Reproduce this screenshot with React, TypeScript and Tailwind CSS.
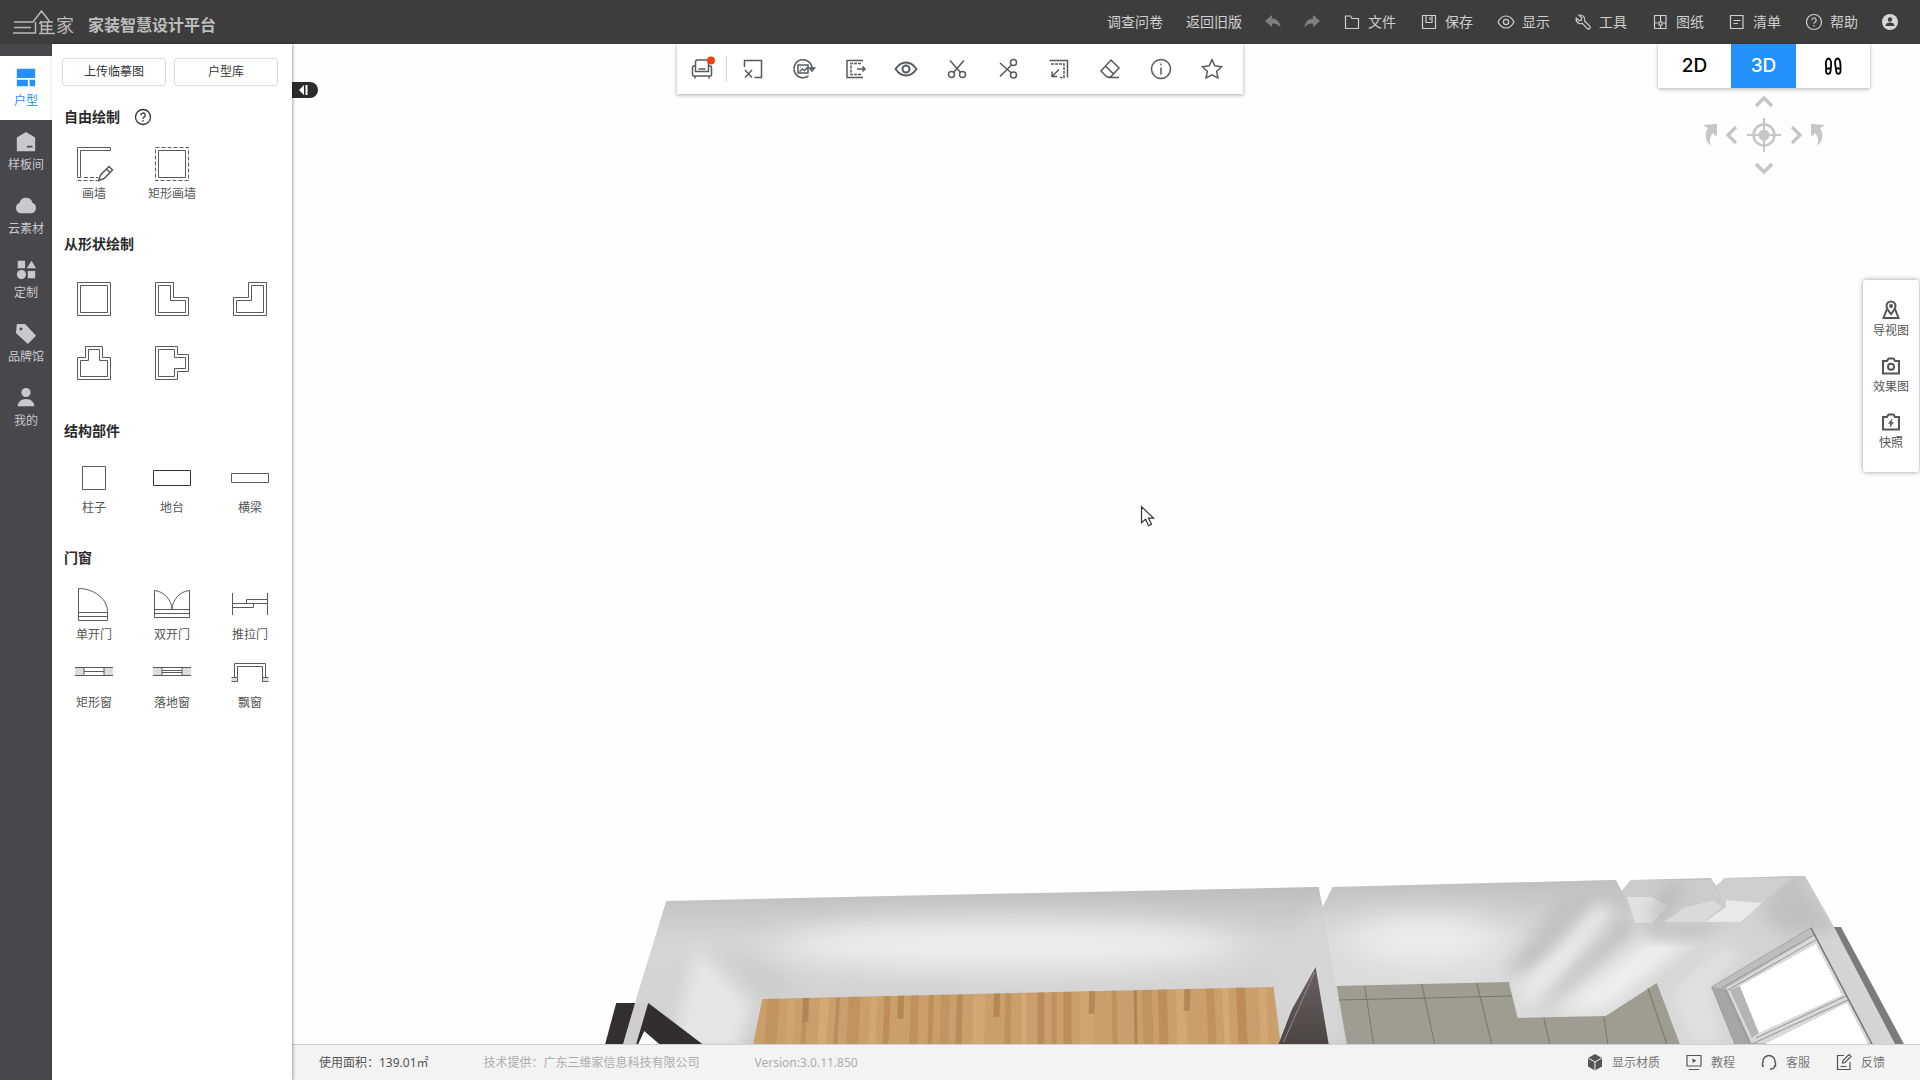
import * as React from 'react'

interface IconProps {
  children: React.ReactNode
  className?: string
  box?: string
}

// Shared wrapper for stroked icons
function Icon({ children, className = 'h-6 w-6', box = '0 0 24 24' }: IconProps) {
  return (
    <svg className={className} viewBox={box} fill="none" stroke="currentColor" strokeWidth="1.5" aria-hidden="true">
      {children}
    </svg>
  )
}

interface Item {
  label: string
  icon: React.ReactNode
}

const MENU: Item[] = [
  { label: '文件', icon: <path d="M2.5 3v12.5h13V5.5H9L7.5 3z" strokeWidth="1.2" /> },
  { label: '保存', icon: <path d="M2.5 2.5h13v13h-13zM6 2.5v7h6v-7M10 4v3" strokeWidth="1.2" /> },
  {
    label: '显示',
    icon: (
      <>
        <path d="M1 9c2-4 5-6 8-6s6 2 8 6c-2 4-5 6-8 6S3 13 1 9z" strokeWidth="1.2" />
        <circle cx="9" cy="9" r="2.6" strokeWidth="1.2" />
      </>
    ),
  },
  {
    label: '工具',
    icon: (
      <path
        d="M5 2.2A4.6 4.6 0 0 1 10.6 8l5.4 5.4a1.2 1.2 0 0 1 0 1.6l-.8.8a1.2 1.2 0 0 1-1.7 0L8.3 10.4A4.6 4.6 0 0 1 2.2 5l2.8 2.6 2.4-.4.5-2.4z"
        strokeWidth="1.2"
      />
    ),
  },
  {
    label: '图纸',
    icon: <path d="M3.5 2.5h11.5v13h-11.5zM9.5 2.5v6M3.5 10h3M12 10h3M9.5 12.5v3M8 9h3v3H8z" strokeWidth="1.2" />,
  },
  { label: '清单', icon: <path d="M2.5 2.5h12.5v13h-12.5zM5.5 7.5h7M5.5 10.5h4.5" strokeWidth="1.2" /> },
  {
    label: '帮助',
    icon: (
      <>
        <circle cx="9" cy="9" r="7.5" strokeWidth="1.2" />
        <path d="M6.8 7.2a2.2 2.2 0 1 1 3.3 1.9c-.8.5-1.1.8-1.1 1.7M9 12v1.4" strokeWidth="1.2" />
      </>
    ),
  },
]

const NAV: Item[] = [
  { label: '户型', icon: <path d="M2 2h20v10H2zM2 14h12v7H2zM16 14h6v7h-6z" /> },
  { label: '样板间', icon: <path fillRule="evenodd" d="M12 1l10 6v15H2V7zM13 16h6v2h-6z" /> },
  { label: '云素材', icon: <path d="M6 20a6 6 0 0 1-1-11.5 7.2 7.2 0 0 1 14 0A6 6 0 0 1 18 20z" /> },
  {
    label: '定制',
    icon: (
      <>
        <path d="M3 2h8v8H3zM18 2l5 8H13zM14 13h8v8h-8z" />
        <circle cx="7" cy="17" r="5" />
      </>
    ),
  },
  {
    label: '品牌馆',
    icon: <path fillRule="evenodd" d="M2 1l9 0 12 13-9 9L1 11zM6.5 5a1.6 1.6 0 1 0 .1 0z" />,
  },
  {
    label: '我的',
    icon: (
      <>
        <circle cx="12" cy="6" r="5" />
        <path d="M3 21c0-5 4-8 9-8s9 3 9 8z" />
      </>
    ),
  },
]

const TOOLS: Item[] = [
  {
    label: '替换清单',
    icon: (
      <>
        <path d="M5.5 9V5a2 2 0 0 1 2-2h9a2 2 0 0 1 2 2v4M5.5 9H4a1.5 1.5 0 0 0-1.5 1.5V18a1 1 0 0 0 1 1h17a1 1 0 0 0 1-1v-7.5A1.5 1.5 0 0 0 20 9h-1.5M5.5 9v5.5h13V9M8.5 12h7M5 19v2.5M19 19v2.5" />
        <circle cx="21" cy="3.5" r="4" fill="#f0430f" stroke="none" />
      </>
    ),
  },
  { label: '清空', icon: <path d="M3.5 10V3.5h17v17h-7M4 13l7 7.5M11 13l-7 7.5" /> },
  {
    label: '旋转图片',
    icon: (
      <>
        <path d="M16.5 18.8A9 9 0 1 1 20 12M17.5 11h5L20 14z" />
        <path d="M6 8h10v8H6zM7.5 14.5l3-2.5 2 1.5 3-3M8.500 10.300h.5" />
      </>
    ),
  },
  {
    label: '导出',
    icon: (
      <>
        <path d="M20 3.5H4v17h16M14 12h8M19.5 9.5L22 12l-2.5 2.5" />
        <path d="M18 6.5H8v11h10" strokeDasharray="3 1" />
      </>
    ),
  },
  {
    label: '显隐',
    icon: (
      <>
        <path
          d="M1.5 12C4.5 7.500 8 5.500 12 5.500s7.500 2 10.500 6.500c-3 4.500-6.500 6.500-10.500 6.500S4.500 16.500 1.500 12z"
          strokeWidth="1.8"
        />
        <circle cx="12" cy="12" r="3.5" strokeWidth="2" />
      </>
    ),
  },
  {
    label: '剪切',
    icon: (
      <>
        <path d="M5 3.5l10.5 12M19 3.5l-10.5 12" />
        <circle cx="6.5" cy="17.5" r="3" />
        <circle cx="17.5" cy="17.5" r="3" />
      </>
    ),
  },
  {
    label: '水平剪切',
    icon: (
      <>
        <path d="M4 6l11.5 10M4 19.5L15.5 8" />
        <circle cx="17.5" cy="5.5" r="3" />
        <circle cx="17.5" cy="18" r="3" />
      </>
    ),
  },
  {
    label: '缩放',
    icon: (
      <>
        <path d="M2.5 3.5h18v17M12 12.5l-7 7M5 14.5v5h5" />
        <path d="M4 7h13v13.5h-4" strokeDasharray="3 1" />
      </>
    ),
  },
  { label: '擦除', icon: <path d="M13 3l8 8-8.500 9H9l-6-6zM7.500 9l8.500 8.500M10 20.500h11" /> },
  {
    label: '信息',
    icon: (
      <>
        <circle cx="12" cy="12" r="9.5" />
        <path d="M12 10.5v7M12 6.5v1.800" />
      </>
    ),
  },
  {
    label: '收藏',
    icon: <path d="M12 2.800l2.900 6 6.600.9-4.800 4.600 1.200 6.600-5.900-3.100-5.900 3.100 1.200-6.600L2.500 9.700l6.600-.9z" />,
  },
]

const FREE_DRAW: Item[] = [
  {
    label: '画墙',
    icon: (
      <>
        <path d="M1.5 31.5v-30h33v3h-30v27z" />
        <path d="M1.5 34.5h20M8 31.5h14" strokeDasharray="4 2" />
        <path d="M22.5 34.5l2-5.500 8.500-8.500 3.500 3.500-8.500 8.500zM30.500 23l3.500 3.500" strokeWidth="1.5" />
      </>
    ),
  },
  {
    label: '矩形画墙',
    icon: (
      <>
        <path d="M1.5 1.5h33v33h-33z" strokeDasharray="4 2" />
        <path d="M4.5 4.5h27v27h-27z" />
      </>
    ),
  },
]

const SHAPES: Item[] = [
  { label: '矩形', icon: <path d="M1.5 1.5h33v33h-33zM4.5 4.5h27v27h-27z" /> },
  { label: 'L形', icon: <path d="M1.5 1.5h18v15h15v18h-33zM4.5 4.5h12v15h15v12h-27z" /> },
  { label: '反L形', icon: <path d="M34.5 1.5h-18v15h-15v18h33zM31.5 4.5h-12v15h-15v12h27z" /> },
  { label: '凸形', icon: <path d="M9.5 1.5h17v11h8v22h-33v-22h8zM12.5 4.5h11v11h8v16h-27v-16h8z" /> },
  { label: '侧凸形', icon: <path d="M1.5 1.5h22v8h11v17h-11v8h-22zM4.5 4.5h16v8h11v11h-11v8h-16z" /> },
]

const PARTS: Item[] = [
  { label: '柱子', icon: <path d="M6.5 6.5h23v23h-23z" /> },
  { label: '地台', icon: <path d="M-.5 10.5h37v15h-37z" stroke="#333" /> },
  { label: '横梁', icon: <path d="M-.5 13.5h37v9h-37z" /> },
]

const OPENINGS: Item[] = [
  { label: '单开门', icon: <path d="M2.5 33.5v-32c16 0 29 11 29 23v9zM2.5 25.5h29M2.5 29.5h29" /> },
  {
    label: '双开门',
    icon: <path d="M.5 30.5v-27c10 1 17 10 17.5 18.5C18.5 13.5 25 4.5 35.5 3.5v27zM.5 22.5h35M.5 26.5h35" />,
  },
  { label: '推拉门', icon: <path d="M.5 6v22M35.5 6v22M.5 16.5h35M14.5 16.5v-4h21M.5 20.5h21v-4" /> },
  {
    label: '矩形窗',
    icon: (
      <>
        <path d="M-1 12.500h9v8h-9M37 12.500h-9v8h9" fill="#ddd" />
        <path d="M8 12.500h20M8 20.500h20M8 16.500h20" />
      </>
    ),
  },
  {
    label: '落地窗',
    icon: (
      <>
        <path d="M-1 12.500h9v8h-9M37 12.500h-9v8h9" fill="#ddd" />
        <path d="M8 12.500h20M8 20.500h20M8 15.500h20M8 17.500h20" />
      </>
    ),
  },
  {
    label: '飘窗',
    icon: (
      <>
        <path d="M-.5 22.500h6v4h-6M36.500 22.500h-6v4h6" fill="#ddd" />
        <path d="M2.5 22.500v-14h31v14M5.500 22.500v-11h25v11" />
      </>
    ),
  },
]

const SIDE: Item[] = [
  {
    label: '导视图',
    icon: (
      <>
        <path d="M6 9l-3.500 9h15L14 9" />
        <path d="M10 14C7 10.500 5.500 8.500 5.500 6a4.500 4.500 0 0 1 9 0c0 2.500-1.500 4.500-4.500 8z" />
        <circle cx="10" cy="6" r="1" />
      </>
    ),
  },
  {
    label: '效果图',
    icon: (
      <>
        <path d="M2 5h4l1.500-2.500h5L14 5h4v12.500H2z" />
        <circle cx="10" cy="10.800" r="3" />
      </>
    ),
  },
  {
    label: '快照',
    icon: (
      <>
        <path d="M2 5h4l1.500-2.500h5L14 5h4v12.500H2z" />
        <path d="M11 7l-3.500 4.500h2L9 15l3.500-4.500h-2z" fill="currentColor" strokeWidth=".5" />
      </>
    ),
  },
]

const STATUS: Item[] = [
  {
    label: '显示材质',
    icon: (
      <>
        <path d="M8 0l7 4v8.500L8 16.500 1 12.500V4z" fill="currentColor" stroke="none" />
        <path d="M1.500 4.300L8 8l6.500-3.700M8 8v8" stroke="#f3f3f3" strokeWidth="1" />
      </>
    ),
  },
  {
    label: '教程',
    icon: (
      <>
        <path d="M1 1.500h14v10.500H1zM3 15.500h10" strokeWidth="1.200" />
        <path d="M6.500 4.500l4 2.300-4 2.300z" fill="currentColor" stroke="none" />
      </>
    ),
  },
  {
    label: '客服',
    icon: (
      <path
        d="M2 9V7.500a6 6 0 0 1 12 0V9M1.500 8.500v3.500h1.500M14.500 8.500v3.500H13M13.500 12c0 2-1.500 3-4.500 3.200"
        strokeWidth="1.400"
      />
    ),
  },
  {
    label: '反馈',
    icon: <path d="M8 1.500H1.500v14h12.500V8M4.500 12.500h6M6.500 9l.5-2.500 6-6 2 2-6 6z" strokeWidth="1.200" />,
  },
]

function Header() {
  return (
    <header className="flex h-11 shrink-0 items-center justify-between bg-[#3d3d3d] pl-3 pr-[22px] text-sm text-[#cfcfcf]">
      <div className="flex items-center text-[#b9b9b9]">
        <Icon className="h-7 w-11" box="0 0 44 28">
          <path d="M2 14h19l8.500-11L38 14M2 19.500h17M1 25h22.500V14M29 13l-1.500 3M29.500 15v10.500M28 14h13M29.500 18h11M29.500 21.500h11M27 25.500h16M35.500 14v11.500" />
        </Icon>
        <span className="pt-1.5 text-lg leading-6">家</span>
        <h1 className="pl-3.5 pt-1.5 text-base font-bold leading-6 text-[#bdbdbd]">家装智慧设计平台</h1>
      </div>
      <nav className="flex items-center gap-[23px]">
        <a href="#survey">调查问卷</a>
        <a href="#legacy">返回旧版</a>
        <button type="button" aria-label="撤销" className="text-[#808080]">
          <svg className="h-4 w-4" viewBox="0 0 16 16" fill="currentColor">
            <path d="M7 1v3.500c5 0 8 3.500 8.500 9.500C13.500 10.500 11 9.500 7 9.500V13L0 7z" />
          </svg>
        </button>
        <button type="button" aria-label="重做" className="text-[#808080]">
          <svg className="h-4 w-4" viewBox="0 0 16 16" fill="currentColor">
            <path d="M9 1v3.500C4 4.500 1 8 .5 14 2.500 10.500 5 9.500 9 9.500V13l7-6z" />
          </svg>
        </button>
        <div className="flex items-center gap-6">
          {MENU.map((item) => (
            <button key={item.label} type="button" className="flex items-center gap-[7px]">
              <Icon className="h-[18px] w-[18px]" box="0 0 18 18">
                {item.icon}
              </Icon>
              {item.label}
            </button>
          ))}
          <button type="button" aria-label="账户">
            <svg className="h-4 w-4" viewBox="0 0 16 16">
              <circle cx="8" cy="8" r="8" fill="#d6d6d6" />
              <circle cx="8" cy="5.500" r="2.200" fill="#3d3d3d" />
              <path d="M3.500 12c0-2.500 2-3.500 4.500-3.500s4.500 1 4.500 3.500z" fill="#3d3d3d" />
            </svg>
          </button>
        </div>
      </nav>
    </header>
  )
}

function NavRail() {
  return (
    <nav className="flex w-13 shrink-0 flex-col bg-[#48474c] pt-3">
      {NAV.map((item, i) => (
        <button
          key={item.label}
          type="button"
          className={`flex h-16 flex-col items-center gap-0.5 pt-[11px] text-xs leading-5 whitespace-nowrap ${
            i === 0 ? 'bg-white text-[#2390fb]' : 'text-[#c9c9cd]'
          }`}
        >
          <svg className="h-[22px] w-6 shrink-0" viewBox="0 0 24 24" fill="currentColor">
            {item.icon}
          </svg>
          {item.label}
        </button>
      ))}
    </nav>
  )
}

function PartGrid({ items }: { items: Item[] }) {
  return (
    <div className="mt-[19px] grid grid-cols-[repeat(3,78px)] gap-y-2.5">
      {items.map((item) => (
        <button key={item.label} type="button" className="flex flex-col items-center gap-0.5 text-xs leading-5 text-[#555]">
          <svg className="h-9 w-9 overflow-visible" viewBox="0 0 36 36" fill="none" stroke="#5a5a5a">
            {item.icon}
          </svg>
          {item.label}
        </button>
      ))}
    </div>
  )
}

function SidePanel() {
  return (
    <aside className="z-10 w-60 shrink-0 bg-white px-[3px] pt-3.5 shadow-[1px_0_3px_rgba(0,0,0,0.35)]">
      <div className="flex gap-2 px-[7px]">
        <button type="button" className="h-7 w-26 rounded-[3px] border border-[#dcdcdc] text-xs text-[#333]">
          上传临摹图
        </button>
        <button type="button" className="h-7 w-26 rounded-[3px] border border-[#dcdcdc] text-xs text-[#333]">
          户型库
        </button>
      </div>

      <section className="mt-[21px]">
        <div className="flex items-center gap-3.5 pl-[9px]">
          <h2 className="text-sm font-bold text-[#2b2b2b]">自由绘制</h2>
          <button type="button" aria-label="帮助" className="text-[#333]">
            <Icon className="h-[18px] w-[18px]" box="0 0 18 18">
              <circle cx="9" cy="9" r="7.5" strokeWidth="1.3" />
              <path d="M6.8 7.2a2.2 2.2 0 1 1 3.3 1.9c-.8.5-1.1.8-1.1 1.7M9 12v1.4" strokeWidth="1.3" />
            </Icon>
          </button>
        </div>
        <PartGrid items={FREE_DRAW} />
      </section>

      <section className="mt-[30px]">
        <h2 className="pl-[9px] text-sm font-bold text-[#2b2b2b]">从形状绘制</h2>
        <div className="mt-[13px] grid grid-cols-[repeat(3,78px)]">
          {SHAPES.map((item) => (
            <button key={item.label} type="button" aria-label={item.label} className="flex h-16 items-center justify-center">
              <svg className="h-9 w-9" viewBox="0 0 36 36" fill="none" stroke="#5a5a5a">
                {item.icon}
              </svg>
            </button>
          ))}
        </div>
      </section>

      <section className="mt-[26px]">
        <h2 className="pl-[9px] text-sm font-bold text-[#2b2b2b]">结构部件</h2>
        <PartGrid items={PARTS} />
      </section>

      <section className="mt-[30px]">
        <h2 className="pl-[9px] text-sm font-bold text-[#2b2b2b]">门窗</h2>
        <PartGrid items={OPENINGS} />
      </section>
    </aside>
  )
}

// Floor planks: x, width, colour
const PLANKS = [
  [770, 12, '#b98a57'], [790, 8, '#d8ac77'], [805, 5, '#b5834f'], [822, 9, '#dcb37f'],
  [838, 4, '#ab7b4c'], [850, 12, '#b88753'], [872, 7, '#dab07b'], [886, 6, '#ad7c4a'],
  [912, 8, '#b5834f'], [930, 5, '#b07e4b'], [942, 9, '#b98955'], [958, 6, '#a8774a'],
  [974, 12, '#dab07b'], [1006, 6, '#b38250'], [1022, 5, '#dcb37f'], [1038, 7, '#a8774a'],
  [1052, 5, '#b5834f'], [1064, 8, '#ad7c4a'], [1080, 14, '#d8ac77'], [1112, 5, '#b38250'],
  [1134, 3, '#976a3e'], [1142, 10, '#b88753'], [1158, 9, '#b07e4b'], [1176, 10, '#dab07b'],
  [1206, 8, '#b5834f'], [1222, 6, '#dcb37f'], [1236, 9, '#ad7c4a'], [1258, 8, '#dab07b'],
] as const

// Rendered view of the two rooms, plus the pointer
function Scene() {
  return (
    <svg
      className="absolute inset-0 h-full w-full"
      viewBox="293 44 1627 1000"
      preserveAspectRatio="xMidYMax slice"
      role="img"
      aria-label="3D 视图"
    >
      <defs>
        <filter id="soft" x="-50%" y="-80%" width="200%" height="260%">
          <feGaussianBlur stdDeviation="22 14" />
        </filter>
        <filter id="soft2" x="-50%" y="-50%" width="200%" height="200%">
          <feGaussianBlur stdDeviation="8" />
        </filter>
        <linearGradient id="wallA" x1="0" y1="0" x2="0" y2="1">
          <stop offset="0.15" stopColor="#bebebe" />
          <stop offset="0.45" stopColor="#d6d6d6" />
          <stop offset="0.8" stopColor="#d2d2d2" />
          <stop offset="1" stopColor="#cacaca" />
        </linearGradient>
        <linearGradient id="wallB" x1="0" y1="0" x2="0" y2="1">
          <stop offset="0.1" stopColor="#bfbfbf" />
          <stop offset="0.4" stopColor="#d8d8d8" />
          <stop offset="1" stopColor="#dedede" />
        </linearGradient>
        <linearGradient id="door" x1="0" y1="0" x2="0" y2="1">
          <stop offset="0" stopColor="#6a6262" />
          <stop offset="1" stopColor="#4a4443" />
        </linearGradient>
        <clipPath id="roomA">
          <path d="M667 901L1319 887 1323 907 1347 1044H623z" />
        </clipPath>
        <clipPath id="roomB">
          <path d="M1323 907L1333 887 1616 880 1622 891 1631 880 1711 878 1716 886 1725 878 1805 876 1834 927 1897 1044H1347z" />
        </clipPath>
        <clipPath id="wood">
          <path d="M763 999L1274 987 1281 1044H754z" />
        </clipPath>
      </defs>
      <path d="M293 44h1627v1000H293z" fill="#fefefe" />

      <g clipPath="url(#roomA)">
        <path d="M600 860h750v184H600z" fill="url(#wallA)" />
        <ellipse cx="1010" cy="945" rx="230" ry="24" fill="#eeeeee" filter="url(#soft)" />
        <path d="M698 950L752 1005 740 1050H670z" fill="#e6e6e6" filter="url(#soft2)" />
        <path d="M716 940L766 994 800 990z" fill="#bdbdbd" opacity="0.4" filter="url(#soft2)" />
        <path d="M1319 900L1350 1044 1284 1044 1275 985z" fill="#d6d6d6" filter="url(#soft2)" />
      </g>
      <g clipPath="url(#wood)">
        <path d="M750 980h540v64H750z" fill="#ca9f6c" />
        {PLANKS.map(([x, w, fill]) => (
          <path key={x} d={`M${x} 980h${w}l${Math.round((x - 1050) / 60)} 64h-${w}z`} fill={fill} opacity="0.5" />
        ))}
        {[804, 899, 995, 1090, 1185].map((x) => (
          <path key={x} d={`M${x} 984h6l-1 ${38 - Math.round((x - 802) / 36)}h-6z`} fill="#af8150" opacity="0.8" />
        ))}
      </g>
      <path d="M617 1003H636L624 1044H606z" fill="#332e30" />
      <path d="M636 1003H649L637 1044H624z" fill="#cfcdcf" />
      <path d="M645 1031L660 1044H639z" fill="#fdfdfd" />
      <path d="M649 1003L703 1044H660L645 1031 639 1044H637z" fill="#322d2f" />
      <path d="M1316 967L1329 1044H1279L1292 1010z" fill="url(#door)" />
      <path d="M1315 972L1284 1042" stroke="#8d8789" />

      <g clipPath="url(#roomB)">
        <path d="M1310 860h600v184h-600z" fill="url(#wallB)" />
        <ellipse cx="1425" cy="940" rx="80" ry="26" fill="#ececec" filter="url(#soft)" />
        <path d="M1318 900L1336 985 1346 1044H1310z" fill="#d8d8d8" />

        {/* light streaks across the boxed-in column */}
        <path d="M1570 880L1616 880 1628 905 1530 975 1505 975z" fill="#c2c2c2" filter="url(#soft2)" />
        <path d="M1500 985L1640 925 1750 915 1650 990 1610 1020 1510 1020z" fill="#d9d9d9" filter="url(#soft2)" />
        <path d="M1596 905L1618 908 1540 1000 1512 1000z" fill="#ececec" filter="url(#soft2)" />
        <path d="M1624 918L1638 926 1552 1000 1538 1006z" fill="#b4b4b4" opacity="0.8" filter="url(#soft2)" />
        <path d="M1650 938L1692 940 1604 1010 1555 1012z" fill="#efefef" filter="url(#soft2)" />
        <path d="M1640 922H1740L1700 938H1650z" fill="#c0c0c0" filter="url(#soft2)" />

        <path d="M1743 922L1795 876H1805L1900 1050H1684L1657 983z" fill="#d3d3d3" filter="url(#soft2)" />
        <path d="M1790 870L1840 930 1785 935 1760 915z" fill="#c0c0c0" filter="url(#soft2)" />
        <path d="M1668 990L1725 945 1745 955 1712 987 1725 1044H1690z" fill="#e0e0e0" filter="url(#soft2)" />

        <path d="M1622 891L1631 880H1711L1726 907 1705 922 1635 924z" fill="#cbcbcb" />
        <path d="M1627 897H1652L1668 906 1652 923H1635z" fill="#e0e0e0" />
        <path d="M1684 884L1660 920 1648 920 1672 884z" fill="#b2b2b2" filter="url(#soft2)" />
        <path d="M1664 922L1684 908 1714 900 1722 907 1704 922z" fill="#dadada" />
        <path d="M1716 886L1725 878H1792L1762 903 1743 922H1705L1726 907z" fill="#cfcfcf" />
        <path d="M1726 900L1762 903 1741 922H1705L1726 907z" fill="#e9e9e9" />
      </g>

      <path d="M1337 986L1509 982 1518 1018 1606 1016 1657 983 1680 1044H1347z" fill="#9f9c91" />
      <path
        d="M1339 1000L1512 996M1365 986L1374 1044M1422 984L1435 1044M1477 983L1492 1044M1544 1018L1550 1044M1604 1017L1608 1044M1648 988L1667 1044"
        stroke="#78756b"
        fill="none"
      />

      {/* window on the right wall */}
      <path d="M1834 927H1841L1904 1044H1895z" fill="#7b7b7b" />
      <path d="M1811 928L1872 1044H1735L1712 987z" fill="#d9d9d9" stroke="#8f8f8f" />
      <path d="M1712 987L1725 985 1752 1044H1735z" fill="#a6a6a6" />
      <path d="M1712 987L1811 928 1814 936 1725 989z" fill="#bdbdbd" />
      <path
        d="M1722 988L1814 935M1728 990L1816 940M1726 990L1750 1044M1756 1038L1846 996M1752 1044L1848 1000"
        stroke="#999"
        fill="none"
      />
      <path d="M1730 990L1740 986 1759 1033 1752 1038z" fill="#b5b5b5" />
      <path d="M1816 944L1842 995 1759 1033 1740 986z" fill="#fff" />
      <path d="M1847 1003L1868 1044H1765z" fill="#fff" />
      <path d="M1811 928L1872 1044" stroke="#7c7c7c" strokeWidth="1.5" />

      <path d="M1142 507v16l4-3.5 3 6.5 3-1.5-3-6h5z" fill="#fff" stroke="#333" strokeWidth="1.2" />
    </svg>
  )
}

function Toolbar() {
  return (
    <div className="absolute left-1/2 top-0 z-20 flex h-[50px] -translate-x-1/2 items-center bg-white pr-[6px] text-[#555a60] shadow-[0_1px_4px_rgba(0,0,0,0.35)]">
      {TOOLS.map((item, i) => (
        <React.Fragment key={item.label}>
          {i === 1 && <div className="h-[26px] w-px bg-[#d4d4d4]" />}
          <button
            type="button"
            title={item.label}
            className={`flex h-full items-center justify-center ${i === 0 ? 'w-[49px]' : 'w-[51px]'}`}
          >
            <Icon className="h-6 w-6 overflow-visible">{item.icon}</Icon>
          </button>
        </React.Fragment>
      ))}
    </div>
  )
}

function ViewSwitch() {
  return (
    <div className="absolute right-[50px] top-0 flex h-11 bg-white font-['Inter',sans-serif] text-[19px] font-medium text-black shadow-[0_1px_4px_rgba(0,0,0,0.3)]">
      <button type="button" className="w-[73px]">
        2D
      </button>
      <button type="button" className="w-[65px] bg-[#2390fb] text-white">
        3D
      </button>
      <button type="button" aria-label="漫游" className="flex w-[74px] items-center justify-center">
        <Icon className="h-[18px] w-5" box="0 0 20 18">
          <path
            d="M3.5 16c-1-2.500 0-4.500-.5-7C2.500 5 3.500 1.500 5.500 1.500S8.500 5 8 9c-.3 3 0 5-1 7-1 1-2.500 1-3.500 0zM3 11.500h5M17 16c1-2 .5-4 .5-6.500C17.500 5 16.500 1.500 14.500 1.500S11.500 5 12.500 9c.6 3 .5 5 1.200 7 1 1 2.300 1 3.300 0zM13 11.500h5"
            strokeWidth="1.8"
          />
        </Icon>
      </button>
    </div>
  )
}

function CameraPad() {
  return (
    <div className="absolute right-[94px] top-[50px] flex flex-col items-center text-[#c6c6c6]">
      <button type="button" aria-label="向上">
        <Icon className="h-4 w-5" box="0 0 20 16">
          <path d="M2 12l8-8 8 8" strokeWidth="3.5" />
        </Icon>
      </button>
      <div className="flex h-[50px] items-center">
        <button type="button" aria-label="左转">
          <svg className="h-6 w-4" viewBox="0 0 16 24" fill="currentColor">
            <path d="M1 2l14-1v13l-4-4c-3 3-4 8-2 13C3 18 2 11 6 5z" />
          </svg>
        </button>
        <button type="button" aria-label="向左" className="mx-1">
          <Icon className="h-5 w-4" box="0 0 16 20">
            <path d="M14 2l-8 8 8 8" strokeWidth="3.5" />
          </Icon>
        </button>
        <button type="button" aria-label="居中" className="mx-1">
          <Icon className="h-9 w-9" box="0 0 36 36">
            <circle cx="18" cy="18" r="10.5" strokeWidth="2.5" />
            <circle cx="18" cy="18" r="5.5" fill="currentColor" stroke="none" />
            <path d="M18 1v34M1 18h34" strokeWidth="2" />
          </Icon>
        </button>
        <button type="button" aria-label="向右" className="mx-1">
          <Icon className="h-5 w-4" box="0 0 16 20">
            <path d="M2 2l8 8-8 8" strokeWidth="3.5" />
          </Icon>
        </button>
        <button type="button" aria-label="右转">
          <svg className="h-6 w-4" viewBox="0 0 16 24" fill="currentColor">
            <path d="M15 2L1 1v13l4-4c3 3 4 8 2 13 6-5 7-12 3-18z" />
          </svg>
        </button>
      </div>
      <button type="button" aria-label="向下">
        <Icon className="h-4 w-5" box="0 0 20 16">
          <path d="M2 4l8 8 8-8" strokeWidth="3.5" />
        </Icon>
      </button>
    </div>
  )
}

function RightDock() {
  return (
    <div className="absolute right-px top-[236px] flex h-48 w-14 flex-col gap-[15px] rounded-[3px] bg-white pt-5 text-[#555] shadow-[0_0_5px_rgba(0,0,0,0.4)]">
      {SIDE.map((item) => (
        <button key={item.label} type="button" className="flex flex-col items-center gap-px text-xs leading-5">
          <svg className="h-5 w-5" viewBox="0 0 20 20" fill="none" stroke="currentColor" strokeWidth="2">
            {item.icon}
          </svg>
          {item.label}
        </button>
      ))}
    </div>
  )
}

function StatusBar() {
  return (
    <footer className="flex h-9 shrink-0 items-center justify-between border-t border-[#cfcfcf] bg-[#f3f3f3] pl-[27px] pr-[35px] text-xs text-[#adadad]">
      <div className="flex items-center gap-[55px]">
        <span className="text-[#555]">使用面积：139.01㎡</span>
        <span>技术提供：广东三维家信息科技有限公司</span>
        <span>Version:3.0.11.850</span>
      </div>
      <div className="flex items-center gap-[26px]">
        {STATUS.map((item) => (
          <button key={item.label} type="button" className="flex items-center gap-[9px] text-[#777]">
            <Icon className="h-[17px] w-4 text-[#555]" box="0 0 16 17">
              {item.icon}
            </Icon>
            {item.label}
          </button>
        ))}
      </div>
    </footer>
  )
}

export default function App() {
  return (
    <div className="flex h-screen flex-col overflow-hidden bg-white font-['Noto_Sans','Noto_Sans_CJK_SC',sans-serif]">
      <Header />
      <div className="relative flex min-h-0 flex-1">
        <NavRail />
        <SidePanel />
        <div className="flex min-w-0 flex-1 flex-col">
          <main className="relative min-h-0 flex-1">
            <Scene />
            <button
              type="button"
              aria-label="收起面板"
              className="absolute left-0 top-[38px] flex h-4 w-[26px] items-center rounded-r-lg bg-[#2c2c2c] pl-[7px] text-white"
            >
              <svg className="h-2.5 w-2.5" viewBox="0 0 10 10" fill="currentColor">
                <path d="M5 0v10L0 5zM6.500 0h2v10h-2z" />
              </svg>
            </button>
            <ViewSwitch />
            <CameraPad />
            <RightDock />
          </main>
          <StatusBar />
        </div>
        <Toolbar />
      </div>
    </div>
  )
}
